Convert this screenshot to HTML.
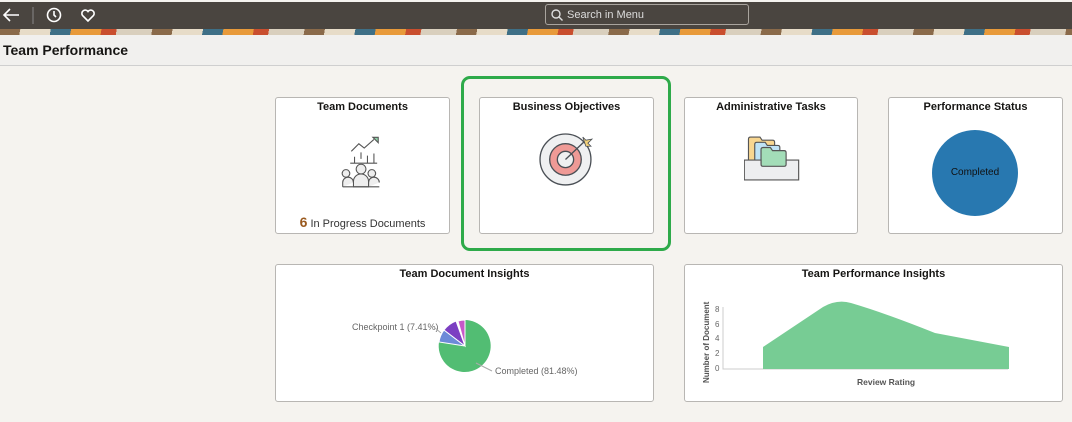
<!DOCTYPE html>
<html><head><style>
*{margin:0;padding:0;box-sizing:border-box}
body{width:1072px;height:422px;overflow:hidden;background:#f5f3ef;font-family:"Liberation Sans",sans-serif;position:relative}
.top{position:absolute;left:0;top:2px;width:1072px;height:27px;background:#4a4540}
.ban{position:absolute;left:0;top:29px;width:1072px;height:6px;background:repeating-linear-gradient(100deg,#8a6a4a 0 20px,#e7dcc8 20px 50px,#3e6f86 50px 70px,#e89a3a 70px 100px,#c94e2e 100px 115px,#d9cfbd 115px 150px)}
.hdr{position:absolute;left:0;top:35px;width:1072px;height:31px;background:#f1f0ee;border-bottom:1px solid #cfcfcf}
.hdr span{position:absolute;left:3px;top:7px;font-size:14px;font-weight:bold;color:#161513}
.search{position:absolute;left:545px;top:2px;width:204px;height:21px;border:1px solid #a9a49e;border-radius:3px;color:#ddd;font-size:11px;padding:4px 0 0 21px}
.tile{position:absolute;background:#fff;border:1px solid #b8b6b3;border-radius:3px}
.tile h3{font-size:11px;font-weight:bold;text-align:center;margin-top:3px;color:#161513}
.hl{position:absolute;left:461px;top:76px;width:210px;height:175px;border:3px solid #2eaa4a;border-radius:9px}
</style></head><body>
<div class="top">
<svg width="110" height="27" style="position:absolute;left:0;top:0" fill="none" stroke="#fff" stroke-width="1.6">
<path d="M19 13H5M10 7l-6 6 6 6"/><path d="M33 5v17" stroke="#888" stroke-width="1"/>
<circle cx="54" cy="13" r="6.5"/><path d="M54 9v4l2 2"/>
<path d="M88 19l-5.5-5.5a3.3 3.3 0 0 1 5.5-4 3.3 3.3 0 0 1 5.5 4z"/>
</svg>
<div class="search"><svg width="12" height="12" style="position:absolute;left:5px;top:4px" fill="none" stroke="#ddd" stroke-width="1.4"><circle cx="5" cy="5" r="4"/><path d="M8 8l3.5 3.5"/></svg>Search in Menu</div>
</div>
<div class="ban"></div>
<div class="hdr"><span>Team Performance</span></div>

<div class="tile" style="left:275px;top:97px;width:175px;height:137px"><h3>Team Documents</h3>
<svg width="54" height="56" viewBox="7 6 38 52" style="position:absolute;left:58px;top:35px" fill="none" stroke="#555" stroke-width="1">
<path d="M17 23l7-7 5 4 9-8"/><path d="M37 10h5v5z" fill="#8fd3a8"/><path d="M16 34h25M20 28v6M26 30v-6M32 34v-7M38 34v-9"/>
<path d="M9 56v-4a5 5 0 0 1 10 0M12 47a3.5 3.5 0 1 1 .1 0M33 56v-4a5 5 0 0 1 10 0M36 47a3.5 3.5 0 1 1 .1 0" fill="#eee"/>
<path d="M19 56v-5a7 7 0 0 1 14 0v5zM26 44a4.5 4.5 0 1 1 .1 0" fill="#eee"/>
<path d="M9 56h34"/>
</svg>
<div style="position:absolute;left:0;width:100%;top:116px;text-align:center;font-size:11px;color:#333"><b style="color:#9a5a1f;font-size:14px">6</b> In Progress Documents</div></div>

<div class="hl"></div>
<div class="tile" style="left:479px;top:97px;width:175px;height:137px"><h3>Business Objectives</h3>
<svg width="55" height="55" viewBox="1 4 54 54" style="position:absolute;left:59px;top:35px">
<circle cx="27" cy="30" r="25" fill="#eff0f1" stroke="#4a4f55" stroke-width="1.3"/>
<circle cx="27" cy="30" r="15.5" fill="#ef9a96" stroke="#4a4f55" stroke-width="1.3"/>
<circle cx="27" cy="30" r="8" fill="#eff0f1" stroke="#4a4f55" stroke-width="1.3"/>
<path d="M27 30L47 11" stroke="#4a4f55" stroke-width="1.3"/>
<path d="M44 8l3 3 6-1-4 4 3 3-5 0z" fill="#f3d27a" stroke="#4a4f55" stroke-width="0.8"/>
</svg></div>

<div class="tile" style="left:684px;top:97px;width:174px;height:137px"><h3>Administrative Tasks</h3>
<svg width="56" height="46" viewBox="0 2 53 44" style="position:absolute;left:59px;top:38px" stroke="#555" stroke-width="1.1">
<path d="M4 25V5q0-2 2-2h9l2 3h10q2 0 2 2v17z" fill="#f8d690"/>
<path d="M10 30V10q0-2 2-2h8l2 3h10q2 0 2 2v17z" fill="#bfe3f6"/>
<path d="M16 33V15q0-2 2-2h7l2 3h11q2 0 2 2v15z" fill="#a3ddb8"/>
<path d="M0 25h16v4q0 2 2 2h20q2 0 2-2v-4h12v19H0z" fill="#edeef0"/>
</svg></div>

<div class="tile" style="left:888px;top:97px;width:175px;height:137px"><h3>Performance Status</h3>
<div style="position:absolute;left:43px;top:32px;width:86px;height:86px;border-radius:50%;background:#2878b0;font-size:10px;color:#111;text-align:center;line-height:86px">Completed</div></div>

<div class="tile" style="left:275px;top:264px;width:379px;height:138px"><h3>Team Document Insights</h3>
<svg width="379" height="110" style="position:absolute;left:0;top:25px" font-family="Liberation Sans" font-size="9" fill="#666">
<path d="M189 56V30A26 26 0 1 1 163 52z" fill="#52bd73"/>
<path d="M189 56L163 52A26 26 0 0 1 168 40z" fill="#6c8ad8" stroke="#fff"/>
<path d="M189 56L168 40A26 26 0 0 1 180 31z" fill="#7c3fc2" stroke="#fff"/>
<path d="M189 56L182 31A26 26 0 0 1 189 30z" fill="#c65ac8" stroke="#fff"/>
<text x="76" y="40">Checkpoint 1 (7.41%)</text><text x="219" y="84">Completed (81.48%)</text>
<path d="M159 38l6 5M200 73l16 8" stroke="#aaa" fill="none"/>
</svg></div>

<div class="tile" style="left:684px;top:264px;width:379px;height:138px"><h3>Team Performance Insights</h3>
<svg width="379" height="120" style="position:absolute;left:0;top:18px" font-family="Liberation Sans" font-size="8" fill="#666">
<text transform="translate(24,100) rotate(-90)" font-weight="bold" font-size="8" fill="#555">Number of Document</text>
<path d="M38 24v62h285" stroke="#ccc" fill="none"/>
<text x="30" y="29">8</text><text x="30" y="44">6</text><text x="30" y="58">4</text><text x="30" y="73">2</text><text x="30" y="88">0</text>
<path d="M78 64L138 24Q152 16 166 20Q200 30 250 50L324 64V86H78z" fill="#77cc94"/>
<text x="172" y="102" font-weight="bold" font-size="8.5" fill="#555">Review Rating</text>
</svg></div>
</body></html>
